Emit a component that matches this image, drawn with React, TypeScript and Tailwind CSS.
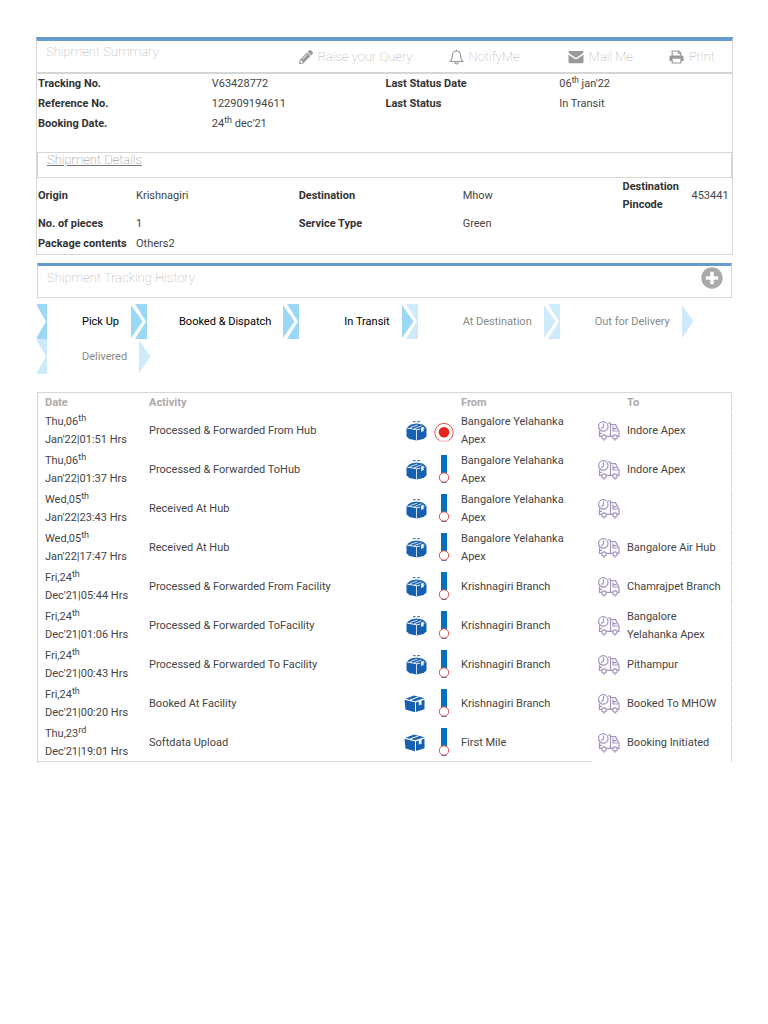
import React from "react";
import { FaPencilAlt, FaPlusCircle } from "react-icons/fa";

const DARK = "#9bd7f6";
const LIGHT = "#cdebfa";

type Step = { label: string; done: boolean; pad: string };

const steps: Step[] = [
  { label: "Pick Up", done: true, pad: "pl-[35px]" },
  { label: "Booked & Dispatch", done: true, pad: "pl-8" },
  { label: "In Transit", done: true, pad: "pl-[45px]" },
  { label: "At Destination", done: false, pad: "pl-[45px]" },
  { label: "Out for Delivery", done: false, pad: "pl-[35px]" },
];

type Row = {
  day: string;
  suffix: string;
  time: string;
  activity: string;
  from: string;
  to: string;
  open: boolean;
};

const rows: Row[] = [
  { day: "Thu,06", suffix: "th", time: "Jan'22|01:51 Hrs", activity: "Processed & Forwarded From Hub", from: "Bangalore Yelahanka Apex", to: "Indore Apex", open: true },
  { day: "Thu,06", suffix: "th", time: "Jan'22|01:37 Hrs", activity: "Processed & Forwarded ToHub", from: "Bangalore Yelahanka Apex", to: "Indore Apex", open: true },
  { day: "Wed,05", suffix: "th", time: "Jan'22|23:43 Hrs", activity: "Received At Hub", from: "Bangalore Yelahanka Apex", to: "", open: true },
  { day: "Wed,05", suffix: "th", time: "Jan'22|17:47 Hrs", activity: "Received At Hub", from: "Bangalore Yelahanka Apex", to: "Bangalore Air Hub", open: true },
  { day: "Fri,24", suffix: "th", time: "Dec'21|05:44 Hrs", activity: "Processed & Forwarded From Facility", from: "Krishnagiri Branch", to: "Chamrajpet Branch", open: true },
  { day: "Fri,24", suffix: "th", time: "Dec'21|01:06 Hrs", activity: "Processed & Forwarded ToFacility", from: "Krishnagiri Branch", to: "Bangalore Yelahanka Apex", open: true },
  { day: "Fri,24", suffix: "th", time: "Dec'21|00:43 Hrs", activity: "Processed & Forwarded To Facility", from: "Krishnagiri Branch", to: "Pithampur", open: true },
  { day: "Fri,24", suffix: "th", time: "Dec'21|00:20 Hrs", activity: "Booked At Facility", from: "Krishnagiri Branch", to: "Booked To MHOW", open: false },
  { day: "Thu,23", suffix: "rd", time: "Dec'21|19:01 Hrs", activity: "Softdata Upload", from: "First Mile", to: "Booking Initiated", open: false },
];

function Bell() {
  return (
    <svg width="15" height="16" viewBox="0 0 15 16" fill="none" stroke="#999" strokeWidth="1.1" aria-hidden="true">
      <path d="M7.5 0.5V2M1 12.5C3 10.8 3.5 9 3.5 6.2C3.5 3.5 5.2 2 7.5 2S11.5 3.5 11.5 6.2C11.5 9 12 10.8 14 12.5Z" strokeLinejoin="round" />
      <path d="M5.8 12.8C5.8 14.2 6.5 14.9 7.5 14.9S9.2 14.2 9.2 12.8" />
    </svg>
  );
}

function Envelope() {
  return (
    <svg width="16" height="14" viewBox="0 0 16 14" fill="#999" aria-hidden="true">
      <path d="M0.5 1.8Q0.5 1 1.5 1H14.5Q15.5 1 15.5 1.8Q15.5 2.8 14.2 3.8L9.3 7.3Q8 8.2 6.7 7.3L1.8 3.8Q0.5 2.8 0.5 1.8Z" />
      <path d="M0.5 4.4L6 8.4Q8 9.8 10 8.4L15.5 4.4V12Q15.5 13.2 14.2 13.2H1.8Q0.5 13.2 0.5 12Z" />
    </svg>
  );
}

function Printer() {
  return (
    <svg width="15" height="14" viewBox="0 0 15 14" aria-hidden="true">
      <path d="M3.2 6V1H9.8L11.8 3V6" fill="none" stroke="#999" strokeWidth="1.2" />
      <path d="M9.3 1V3.5H11.8" fill="none" stroke="#999" strokeWidth="1" />
      <path d="M2 5.6H13Q14.6 5.6 14.6 7.2V11H12V8.8H3V11H0.4V7.2Q0.4 5.6 2 5.6Z" fill="#999" />
      <path d="M3.2 9.3V13H11.8V9.3" fill="none" stroke="#999" strokeWidth="1.2" />
    </svg>
  );
}

function Notch({ done }: { done: boolean }) {
  return (
    <svg width="10" height="35" viewBox="0 0 10 35" aria-hidden="true">
      <path d="M0 0H10V35H0V33L9 17.5L0 2Z" fill={done ? DARK : LIGHT} />
    </svg>
  );
}

function Arrow({ done, next }: { done: boolean; next?: boolean }) {
  return (
    <svg width="16" height="35" viewBox="0 0 16 35" className="shrink-0" aria-hidden="true">
      <path d="M0 1L11.5 17.5L0 34Z" fill={done ? DARK : LIGHT} />
      {next !== undefined && (
        <path d="M4 0H16V35H4L15 17.5Z" fill={next ? DARK : LIGHT} />
      )}
    </svg>
  );
}

function Parcel({ open }: { open: boolean }) {
  return (
    <svg width="24" height="22" viewBox="0 0 24 22" className={open ? "ml-px" : "ml-0"} aria-hidden="true">
      {open ? (
        <>
          <path d="M8 1.7H10.6M12.2 1.7H15" stroke="#1b62b0" strokeWidth="1" />
          <path d="M1.5 8L11.5 9.8L21.5 8V16.5L18.5 19L11.5 20.4L4.5 19L1.5 16.5Z" fill="#1560b0" />
          <path d="M1.5 7.6L6 4.4L11.5 3.6L17.5 4.4L21.5 7.6L11.5 9.8Z" fill="#1b62b0" />
          <path d="M5 7.6L12.5 5M9 8.8L16.5 5.8M11.5 9.8V20.4M2 8L11.5 9.8L15 9.2" fill="none" stroke="white" strokeWidth="0.8" />
          <path d="M16.2 7.6L18.6 6.8V11.5L17.6 11L16.2 12.6Z" fill="white" />
        </>
      ) : (
        <>
          <path d="M0.5 6.6L11.5 9L20.5 6.3V16.2L11 19.2L1.5 16.5Z" fill="#1560b0" />
          <path d="M1 6L10 2.5L20.5 5.2L11 8.2Z" fill="#1b62b0" />
          <path d="M0.5 6.3L11.5 9L21 6M11.5 9V19.5M5.5 7.2L14.5 3.9" fill="none" stroke="white" strokeWidth="1" />
          <path d="M14.8 8L17.5 7.2V12.2L16.2 11.6L14.8 13Z" fill="white" />
        </>
      )}
    </svg>
  );
}

function Marker({ current }: { current: boolean }) {
  return current ? (
    <svg width="22" height="30" viewBox="0 0 22 30" className="ml-px" aria-hidden="true">
      <path d="M6.5 24.6A9.2 9.2 0 1 1 15.5 24.6" fill="none" stroke="#e2524c" strokeWidth="1" />
      <circle cx="11" cy="16.3" r="5.3" fill="#e6231d" />
      <path d="M6.5 25H15.5" stroke="#ef9792" strokeWidth="0.8" />
    </svg>
  ) : (
    <svg width="22" height="30" viewBox="0 0 22 30" className="ml-px" aria-hidden="true">
      <rect x="8" y="0" width="6" height="19" fill="#0670bd" />
      <circle cx="11" cy="22.5" r="4.7" fill="white" stroke="#df4c4b" strokeWidth="1" />
      <path d="M8.5 27.5H13.5" stroke="#6468a0" strokeWidth="1" />
    </svg>
  );
}

function Truck() {
  return (
    <svg width="22" height="22" viewBox="0 0 22 22" className="shrink-0" fill="none" stroke="#a493bd" strokeWidth="1.2" aria-hidden="true">
      <circle cx="5.3" cy="6.4" r="4.7" />
      <path d="M5.5 3.2V6.7L3.3 8.7M10 3H12.5V16.3H8.5M13 4.6H17.5L20 9.3L21 11V16.3H19.3M14.8 16.3H13M15 6.5V11H20M15 8.6H18.5M1.5 10.5V16.3H3.5M2 13.3H4" />
      <circle cx="6" cy="17" r="2.2" />
      <circle cx="17" cy="17" r="2.2" />
      <path d="M6 19.5V20.8M17 19.5V20.8" />
    </svg>
  );
}

export default function App() {
  const label = "pl-px text-left font-bold text-[#333]";
  const value = "pl-px text-left";
  const raised = "-top-1 text-[9px]";
  const action = "flex items-center gap-[5px] whitespace-nowrap font-thin text-[#aaa]";
  return (
    <main className="bg-white pt-[37px] pr-[35px] pl-9 font-['Roboto',sans-serif] text-[11px] leading-[18px] text-[#444]">
      <section className="border border-t-4 border-[#d6d6d6] border-t-[#6699cc]">
        <header className="flex h-[33px] border-b-2 border-[#d6d6d6] pl-[9px] text-[13px] leading-[22px]">
          <h2 className="flex-1 font-thin text-[#aaa]">Shipment Summary</h2>
          <nav className="flex items-center pr-[17px]">
            <button type="button" className={`${action} mr-9`}>
              <FaPencilAlt className="size-[14px] text-[#999]" />
              Raise your Query
            </button>
            <button type="button" className={`${action} mr-12`}>
              <Bell />
              NotifyMe
            </button>
            <button type="button" className={`${action} mr-9`}>
              <Envelope />
              Mail Me
            </button>
            <button type="button" className={action}>
              <Printer />
              Print
            </button>
          </nav>
        </header>
        <table className="w-full table-fixed">
          <tbody>
            <tr className="h-5">
              <th className={label}>Tracking No.</th>
              <td className={value}>V63428772</td>
              <th className={label}>Last Status Date</th>
              <td className={value}>06<sup>th</sup> jan'22</td>
            </tr>
            <tr className="h-5">
              <th className={label}>Reference No.</th>
              <td className={value}>122909194611</td>
              <th className={label}>Last Status</th>
              <td className={value}>In Transit</td>
            </tr>
            <tr className="h-5">
              <th className={label}>Booking Date.</th>
              <td className={value}>24<sup className={raised}>th</sup> dec'21</td>
              <td />
              <td />
            </tr>
          </tbody>
        </table>
        <h2 className="mt-[18px] h-[26px] border border-[#d6d6d6] pl-[9px] text-[13px] leading-[14px] font-thin text-[#777] underline">
          Shipment Details
        </h2>
        <table className="w-full table-fixed">
          <colgroup>
            <col className="w-[98px]" />
            <col className="w-[23.4%]" />
            <col className="w-[23.6%]" />
            <col className="w-[23%]" />
            <col className="w-[69px]" />
            <col />
          </colgroup>
          <tbody>
            <tr>
              <th className={label}>Origin</th>
              <td className={value}>Krishnagiri</td>
              <th className={label}>Destination</th>
              <td className={value}>Mhow</td>
              <th className={label}>Destination Pincode</th>
              <td className={value}>453441</td>
            </tr>
            <tr className="h-5">
              <th className={label}>No. of pieces</th>
              <td className={value}>1</td>
              <th className={label}>Service Type</th>
              <td className={value}>Green</td>
              <td />
              <td />
            </tr>
            <tr className="h-5">
              <th className={`${label} whitespace-nowrap`}>Package contents</th>
              <td className={value}>Others2</td>
              <td />
              <td />
              <td />
              <td />
            </tr>
          </tbody>
        </table>
      </section>

      <section className="mt-2 px-px">
        <header className="flex h-[35px] justify-between border border-t-[3px] border-[#d6d6d6] border-t-[#6699cc] pr-2 pl-[9px] text-[13px] leading-[24px]">
          <h2 className="font-thin text-[#aaa]">Shipment Tracking History</h2>
          <button type="button" aria-label="Expand" className="flex h-6 items-center">
            <FaPlusCircle className="size-[22px] text-[#aaa]" />
          </button>
        </header>

        <ol className="mt-1.5 flex flex-wrap text-black">
          {steps.map((s, i) => (
            <li key={s.label} className="flex items-center">
              {i === 0 && <Notch done />}
              <span className={`${s.pad} pr-3 ${s.done ? "text-black" : "text-[#888]"}`}>{s.label}</span>
              <Arrow done={s.done} next={steps[i + 1]?.done} />
            </li>
          ))}
          <li className="flex items-center">
            <Notch done={false} />
            <span className="pr-3 pl-[35px] text-[#888]">Delivered</span>
            <Arrow done={false} />
          </li>
        </ol>

        <div className="mt-[18px] border-t border-l border-[#d6d6d6]">
          <table className="w-full table-fixed border-separate border-spacing-x-0 border-spacing-y-[1px]">
            <colgroup>
              <col className="w-[111px]" />
              <col />
              <col className="w-[28px]" />
              <col className="w-[28px]" />
              <col className="w-[132px]" />
              <col className="w-[140px]" />
            </colgroup>
            <thead>
              <tr className="text-left leading-[17px] text-[#aaa]">
                <th className="pl-[7px] font-bold">Date</th>
                <th className="font-bold">Activity</th>
                <td />
                <td />
                <th className="pl-px font-bold">From</th>
                <th className="border-r border-[#d6d6d6] pl-[35px] font-bold">To</th>
              </tr>
            </thead>
            <tbody>
              {rows.map((r, i) => {
                const edge = i === rows.length - 1 ? "border-b border-[#d6d6d6]" : "";
                return (
                  <tr key={r.time} className="h-[38px]">
                    <td className={`pl-[7px] ${edge}`}>
                      {r.day}<sup className={raised}>{r.suffix}</sup>
                      <br />
                      {r.time}
                    </td>
                    <td className={edge}>{r.activity}</td>
                    <td className={edge}><Parcel open={r.open} /></td>
                    <td className={edge}><Marker current={i === 0} /></td>
                    <td className={`pr-4 pl-px ${edge}`}>{r.from}</td>
                    <td className="border-r border-[#d6d6d6] pr-2 pl-1.5">
                      <div className="flex items-center gap-[7px]">
                        <Truck />
                        <span>{r.to}</span>
                      </div>
                    </td>
                  </tr>
                );
              })}
            </tbody>
          </table>
        </div>
      </section>
    </main>
  );
}
